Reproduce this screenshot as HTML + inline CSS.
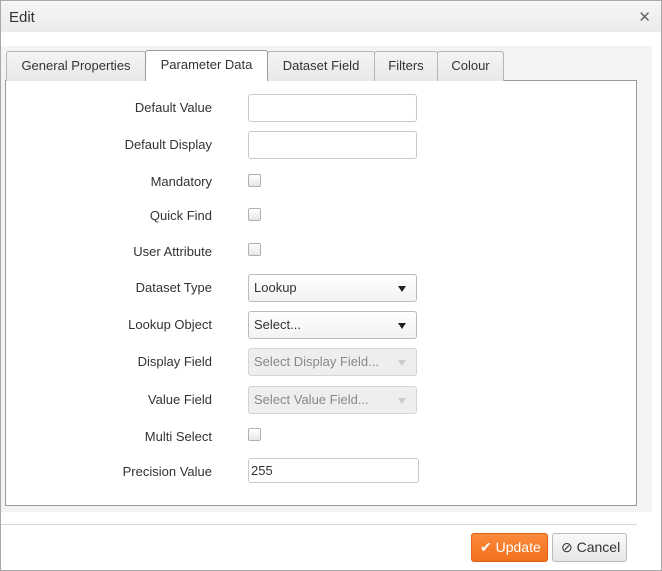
<!DOCTYPE html>
<html><head><style>
*{box-sizing:border-box;margin:0;padding:0}
body{width:662px;height:571px;background:#fff;font-family:"Liberation Sans",sans-serif;font-size:13px;color:#333;position:relative;overflow:hidden}
.frame{position:absolute;left:0;top:0;width:662px;height:571px;border:1px solid #a8a8a8}
.hdr{position:absolute;left:1px;top:1px;width:660px;height:31px;background:linear-gradient(#f6f6f6,#ebebeb)}
.hdr .t{position:absolute;left:8px;top:8px;font-size:15px;color:#333}
.hdr .x{position:absolute;right:10px;top:7px;font-size:15px;color:#666}
.panel{position:absolute;left:1px;top:46px;width:651px;height:466px;background:#f3f3f3}
.box{position:absolute;left:5px;top:80px;width:632px;height:426px;background:#fff;border:1px solid #9a9a9a}
.tab{position:absolute;top:51px;height:30px;border:1px solid #b5b5b5;border-bottom:none;border-radius:3px 3px 0 0;background:linear-gradient(#f4f4f4,#e8e8e8);text-align:center;line-height:28px;color:#333}
.tab.a{top:50px;height:31px;background:#fff;border-color:#9a9a9a;z-index:2}
.lbl{position:absolute;right:450px;text-align:right;white-space:nowrap}
.inp{position:absolute;left:248px;width:169px;height:28px;border:1px solid #c8c8c8;border-radius:3px;background:#fff;padding-left:5px;line-height:26px}
.sel{background:linear-gradient(#fff,#f2f2f2);border-color:#bbb}
.sel:after{content:"";position:absolute;right:10px;top:11px;border-left:4px solid transparent;border-right:4px solid transparent;border-top:6px solid #222}
.dis{background:#eee;color:#888;border-color:#d4d4d4}
.dis:after{border-top-color:#ccc}
.cb{position:absolute;left:248px;width:13px;height:13px;border:1px solid #b0b0b0;border-radius:2px;background:linear-gradient(#fff,#e6e6e6)}
.line{position:absolute;left:1px;top:524px;width:636px;height:1px;background:#d6d6d6}
.btn{position:absolute;top:533px;height:29px;border-radius:3px;font-size:14px;line-height:27px;padding-left:8px}
</style></head><body>
<div class="frame"></div>
<div class="hdr"><span class="t">Edit</span><span class="x">✕</span></div>
<div class="panel"></div>
<div class="box"></div>
<div class="tab" style="left:6px;width:140px">General Properties</div>
<div class="tab a" style="left:145px;width:123px">Parameter Data</div>
<div class="tab" style="left:267px;width:108px">Dataset Field</div>
<div class="tab" style="left:374px;width:64px">Filters</div>
<div class="tab" style="left:437px;width:67px">Colour</div>

<div class="lbl" style="top:100px">Default Value</div><div class="inp" style="top:94px"></div>
<div class="lbl" style="top:137px">Default Display</div><div class="inp" style="top:131px"></div>
<div class="lbl" style="top:174px">Mandatory</div><div class="cb" style="top:174px"></div>
<div class="lbl" style="top:208px">Quick Find</div><div class="cb" style="top:208px"></div>
<div class="lbl" style="top:244px">User Attribute</div><div class="cb" style="top:243px"></div>
<div class="lbl" style="top:280px">Dataset Type</div><div class="inp sel" style="top:274px">Lookup</div>
<div class="lbl" style="top:317px">Lookup Object</div><div class="inp sel" style="top:311px">Select...</div>
<div class="lbl" style="top:354px">Display Field</div><div class="inp sel dis" style="top:348px">Select Display Field...</div>
<div class="lbl" style="top:392px">Value Field</div><div class="inp sel dis" style="top:386px">Select Value Field...</div>
<div class="lbl" style="top:429px">Multi Select</div><div class="cb" style="top:428px"></div>
<div class="lbl" style="top:464px">Precision Value</div><div class="inp" style="top:458px;width:171px;height:25px;line-height:23px;padding-left:2px">255</div>

<div class="line"></div>
<div class="btn" style="left:471px;width:77px;background:linear-gradient(#fb8a3c,#f2701c);border:1px solid #e0631a;color:#fff">✔ Update</div>
<div class="btn" style="left:552px;width:75px;background:linear-gradient(#fafafa,#e6e6e6);border:1px solid #bbb;color:#333">⊘ Cancel</div>
</body></html>
